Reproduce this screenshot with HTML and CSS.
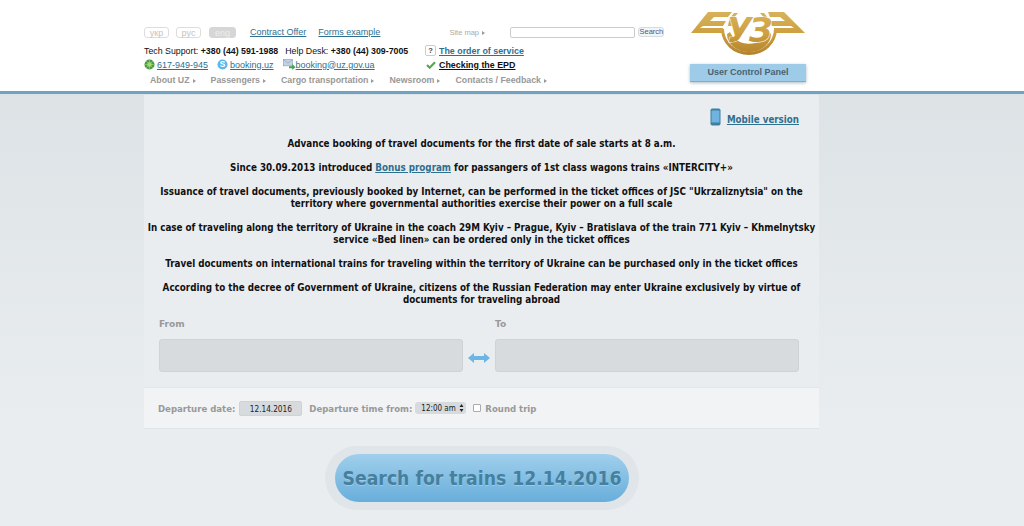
FILE: index.html
```html
<!DOCTYPE html>
<html lang="en">
<head>
<meta charset="utf-8">
<title>UZ booking</title>
<link rel="stylesheet" href="styles.css">
</head>
<body>
<header class="header">
  <div class="header-inner">
    <div class="header-left">
      <div class="row-top">
        <div class="langs">
          <span class="lang">укр</span>
          <span class="lang">рус</span>
          <span class="lang active">eng</span>
        </div>
        <a class="top-link" href="#">Contract Offer</a>
        <a class="top-link" href="#">Forms example</a>
        <span class="sitemap">Site map<i class="tri grey"></i></span>
        <input class="search-input" type="text" aria-label="Search">
        <span class="search-btn">Search</span>
      </div>
      <div class="row-contacts">
        <div class="contacts">
          <div class="line phones">
            <span>Tech Support: <b>+380 (44) 591-1988</b></span>
            <span class="help">Help Desk: <b>+380 (44) 309-7005</b></span>
          </div>
          <div class="line">
            <svg class="ico" viewBox="0 0 12 12"><circle cx="6" cy="6" r="5.500" fill="#4e9a4a"/><path d="M6 .8v10.400M.8 6h10.400M2.300 2.300l7.400 7.400M9.700 2.300l-7.400 7.400" stroke="#8ccb5e" stroke-width=".9"/><circle cx="6" cy="6" r="2.400" fill="#a6dc6e"/></svg>
            <a href="#">617-949-945</a>
            <svg class="ico skype" viewBox="0 0 12 12"><circle cx="6" cy="6" r="5.500" fill="#5cb8ea"/><text class="skype-s" x="6" y="9" text-anchor="middle" fill="#fff">S</text></svg>
            <a href="#">booking.uz</a>
            <svg class="ico mail" viewBox="0 0 14 12"><rect x=".3" y=".5" width="10" height="7" fill="#c3d3e6" stroke="#8397b0" stroke-width=".6"/><path d="M.3 .5l5 4 5-4" fill="none" stroke="#8397b0" stroke-width=".6"/><path d="M6.500 8h3.500V5.500l3.500 3.500-3.500 3V10H6.500z" fill="#3fa34a"/></svg>
            <a href="#">booking@uz.gov.ua</a>
          </div>
        </div>
        <div class="service">
          <div class="line"><span class="qmark">?</span><a class="bold" href="#">The order of service</a></div>
          <div class="line"><svg class="check" viewBox="0 0 11 9"><path d="M1 4.500l3 3L10 1.500" fill="none" stroke="#52a84a" stroke-width="2.400"/></svg><a class="bold dark" href="#">Checking the EPD</a></div>
        </div>
      </div>
      <nav class="nav">
        <a href="#">About UZ<i class="tri"></i></a>
        <a href="#">Passengers<i class="tri"></i></a>
        <a href="#">Cargo transportation<i class="tri"></i></a>
        <a href="#">Newsroom<i class="tri"></i></a>
        <a href="#">Contacts / Feedback<i class="tri"></i></a>
      </nav>
    </div>
    <div class="header-right">
      <svg class="logo" viewBox="0 0 116 46" aria-label="UZ">
        <defs>
          <linearGradient id="gold" gradientUnits="userSpaceOnUse" x1="0" y1="0" x2="0" y2="46">
            <stop offset="0" stop-color="#d9b45c"/>
            <stop offset=".5" stop-color="#cda040"/>
            <stop offset="1" stop-color="#b2802a"/>
          </linearGradient>
        </defs>
        <path d="M1 23 L18 2 H42 L38 7 H24 L20 11 H36 L33 16 H13 L10 18 H33 V23Z" fill="url(#gold)"/>
        <path d="M115 23 L94 2 H78 L80 7 H90 L95 11 H80 L82 16 H101 L104 18 H84 V23Z" fill="url(#gold)"/>
        <path d="M31 19 A28 26 0 0 0 87 19 H84 A25 23 0 0 1 34 19Z" fill="url(#gold)"/>
        <path d="M37 24 A22 18 0 0 0 81 24 L78 22 A20 17 0 0 1 40 22Z" fill="url(#gold)"/>
        <path d="M44 3 A22 22 0 0 0 38 16 L42 16 A20 20 0 0 1 48 3Z" fill="url(#gold)"/>
        <path d="M74 3 A22 22 0 0 1 80 16 L76 16 A20 20 0 0 0 70 3Z" fill="url(#gold)"/>
        <text class="logo-text" x="58" y="32" text-anchor="middle" fill="url(#gold)">УЗ</text>
      </svg>
      <a class="ucp" href="#">User Control Panel</a>
    </div>
  </div>
</header>
<main class="page">
  <section class="panel">
    <div class="mobile">
      <svg class="phone" viewBox="0 0 11 18"><rect x=".5" y=".5" width="10" height="17" rx="1.800" fill="#3f7f9f"/><rect x="1.500" y="2.500" width="8" height="12" fill="#6fb4e0"/></svg>
      <a href="#">Mobile version</a>
    </div>
    <div class="notes">
      <p>Advance booking of travel documents for the first date of sale starts at 8 a.m.</p>
      <p>Since 30.09.2013 introduced <a href="#">Bonus program</a> for passangers of 1st class wagons trains «INTERCITY+»</p>
      <p>Issuance of travel documents, previously booked by Internet, can be performed in the ticket offices of JSC "Ukrzaliznytsia" on the territory where governmental authorities exercise their power on a full scale</p>
      <p>In case of traveling along the territory of Ukraine in the coach 29M Kyiv – Prague, Kyiv – Bratislava of the train 771 Kyiv – Khmelnytsky service «Bed linen» can be ordered only in the ticket offices</p>
      <p>Travel documents on international trains for traveling within the territory of Ukraine can be purchased only in the ticket offices</p>
      <p>According to the decree of Government of Ukraine, citizens of the Russian Federation may enter Ukraine exclusively by virtue of documents for traveling abroad</p>
    </div>
    <div class="stations">
      <div class="station">
        <label class="st-label">From</label>
        <div class="st-input"></div>
      </div>
      <svg class="swap" viewBox="0 0 22 10"><path d="M0 5l6-5v3h10V0l6 5-6 5V7H6v3z" fill="#6db5e2"/></svg>
      <div class="station">
        <label class="st-label">To</label>
        <div class="st-input"></div>
      </div>
    </div>
    <div class="dates">
      <span class="d-label">Departure date:</span>
      <span class="d-field">12.14.2016</span>
      <span class="d-label time">Departure time from:</span>
      <span class="d-select"><span class="d-value">12:00 am</span><svg class="updown" viewBox="0 0 5 9"><path d="M2.500 0l2.200 3.500H.3zM2.500 9L.3 5.500h4.400z" fill="#222"/></svg></span>
      <span class="d-check"></span>
      <span class="d-label">Round trip</span>
    </div>
  </section>
  <div class="submit-wrap">
    <div class="submit-halo"><span class="submit">Search for trains 12.14.2016</span></div>
  </div>
</main>
</body>
</html>
```

FILE: styles.css
```css
* { box-sizing: border-box; }
html, body { margin: 0; padding: 0; height: 526px; overflow: hidden; }
body {
  font-family: "Liberation Sans", Arial, sans-serif;
  font-size: 9px;
  color: #111;
  background: linear-gradient(#d9dfe2 0, #e1e6e9 200px, #e9edf0 430px);
}
a { color: #2f6f8f; }

.header { height: 94px; background: #fff; border-bottom: 3px solid #6fa3c2; }
.header-inner { width: 675px; margin-left: 144px; display: flex; }
.header-left { width: 546px; padding-top: 26px; }
.header-right { width: 116px; padding-top: 10px; display: flex; flex-direction: column; align-items: center; }

.row-top { display: flex; align-items: center; height: 12px; }
.langs { display: flex; gap: 7px; }
.lang { width: 25px; height: 11px; line-height: 10px; text-align: center; font-size: 9px; color: #c4c4c4; border: 1px solid #ddd; border-radius: 3px; }
.lang.active { background: #d6d6d6; border-color: #d6d6d6; color: #eee; width: 27px; margin-left: 1px; }
.top-link { margin-left: 12px; font-size: 9px; }
.langs + .top-link { margin-left: 14px; }
.sitemap { margin-left: 69px; font-size: 7.500px; color: #aaa; width: 61px; }
.tri { display: inline-block; width: 0; height: 0; margin-left: 3px; border-left: 3px solid #999; border-top: 2.500px solid transparent; border-bottom: 2.500px solid transparent; }
.search-input { width: 125px; height: 11px; padding: 0; border: 1px solid #ccc; border-radius: 2px; background: #fff; }
.search-btn { margin-left: 3px; width: 26px; height: 10px; line-height: 8px; font-size: 7.500px; color: #557; text-align: center; border: 1px solid #d5dbe0; border-radius: 3px; background: #f2f5f7; }

.row-contacts { display: flex; margin-top: 6px; }
.contacts { width: 281px; }
.line { display: flex; align-items: center; height: 13px; white-space: nowrap; }
.line + .line { margin-top: 1px; }
.phones span { white-space: pre; }
.phones { font-size: 8.800px; }
.help { margin-left: 7px; }
.ico { width: 11px; height: 11px; margin-right: 2px; }
.skype { margin-left: 9px; }
.mail { margin-left: 9px; width: 13px; margin-right: 0; }
.skype-s { font-family: "Liberation Sans", sans-serif; font-size: 9px; font-weight: 700; }
.service .line { font-size: 8.900px; }
.qmark { width: 11px; height: 11px; margin-right: 3px; border: 1px solid #ccc; border-radius: 2px; font-size: 7.500px; font-weight: 700; line-height: 9px; text-align: center; color: #444; }
.check { width: 10px; height: 8px; margin-right: 3px; margin-left: 1px; }
.bold { font-weight: 700; }
.bold.dark { color: #111; }

.nav { display: flex; gap: 15px; margin-top: 2px; padding-left: 6px; height: 14px; align-items: center; white-space: nowrap; }
.nav a { font-size: 8.800px; font-weight: 700; color: #999; text-decoration: none; }

.logo { width: 116px; height: 46px; display: block; }
.logo-text { font-family: "DejaVu Sans", sans-serif; font-weight: 700; font-style: italic; font-size: 33px; letter-spacing: -3px; stroke: #fff; stroke-width: 1px; paint-order: stroke; }
.ucp { display: block; width: 116px; height: 18px; margin-top: 8px; line-height: 17px; text-align: center; font-size: 9px; font-weight: 700; color: #4a6272; text-decoration: none; background: #9ecbe8; border-bottom: 1px solid #86aac4; box-shadow: 0 1px 3px rgba(90,120,140,.5); }

.page { display: flex; flex-direction: column; align-items: flex-start; }
.panel { width: 675px; margin-left: 144px; margin-top: 1px; height: 335px; background: #e9edf0; }
.mobile { display: flex; justify-content: flex-end; align-items: flex-start; gap: 6px; padding: 13px 20px 0 0; height: 43px; }
.mobile a { margin-top: 6px; font-family: "DejaVu Sans Condensed", "DejaVu Sans", sans-serif; font-size: 9.700px; font-weight: 700; color: #2f6f8f; }
.phone { width: 11px; height: 18px; }

.notes { font-family: "DejaVu Sans Condensed", "DejaVu Sans", sans-serif; font-size: 9.760px; font-weight: 700; line-height: 12px; text-align: center; color: #111; }
.notes p { margin: 0 0 12px; }
.notes a { color: #2f6f8f; }

.stations { display: flex; align-items: flex-end; padding-left: 15px; margin-top: 13px; }
.station { width: 304px; }
.st-label { display: block; height: 11px; line-height: 11px; font-family: "DejaVu Sans", sans-serif; font-size: 9px; font-weight: 700; color: #999; margin-bottom: 9px; }
.st-input { height: 33px; background: #d7dbde; border: 1px solid #cfd3d6; border-radius: 3px; }
.swap { width: 22px; height: 10px; margin: 0 5px 9px; }

.dates { display: flex; align-items: center; margin-top: 15px; height: 42px; padding-left: 14px; background: #f1f3f5; border-top: 1px solid #e2e6e9; border-bottom: 1px solid #e0e3e6; font-family: "DejaVu Sans Condensed", "DejaVu Sans", sans-serif; white-space: nowrap; }
.d-label { font-size: 9.500px; font-weight: 700; color: #999; }
.d-label.time { margin-left: 7px; }
.d-field { width: 63px; height: 15px; margin-left: 4px; line-height: 14px; text-align: center; font-size: 8.200px; color: #222; background: #d7dbde; border: 1px solid #cfd3d6; border-radius: 2px; }
.d-select { display: flex; align-items: center; justify-content: space-between; width: 51px; height: 12px; margin-left: 3px; padding: 0 2px 0 6px; font-size: 8px; color: #222; background: #d7dbde; border-radius: 3px; }
.updown { width: 5px; height: 8px; }
.d-check { width: 8px; height: 8px; margin: 0 4px 0 7px; background: #fff; border: 1px solid #aaa; border-radius: 1px; }

.submit-wrap { width: 1024px; padding: 16px 0 0 325px; }
.submit-halo { width: 314px; height: 64px; padding: 8px 10px; background: #dfe5e8; border-radius: 32px; }
.submit { display: block; height: 48px; line-height: 50px; white-space: nowrap; text-align: center; font-family: "DejaVu Sans Condensed", "DejaVu Sans", sans-serif; font-size: 19.200px; font-weight: 700; color: #46809f; text-shadow: 0 1px 0 rgba(255,255,255,.25); background: linear-gradient(#a0cfec, #68aedb); border-radius: 24px; }
```
